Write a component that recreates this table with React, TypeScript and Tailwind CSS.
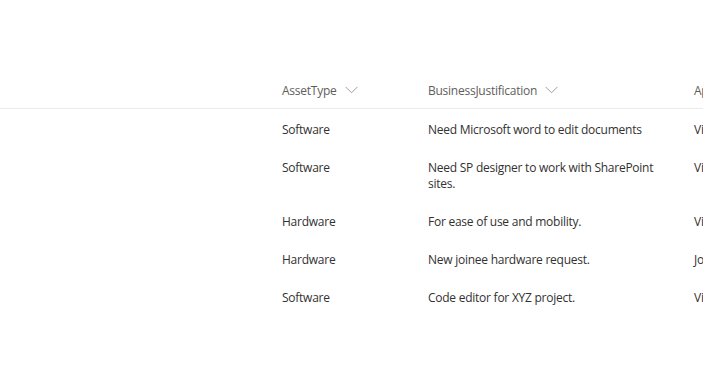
import React from "react";

const rows: [string, string, string][] = [
  ["Software", "Need Microsoft word to edit documents", "Vivek"],
  ["Software", "Need SP designer to work with SharePoint sites.", "Vivek"],
  ["Hardware", "For ease of use and mobility.", "Vivek"],
  ["Hardware", "New joinee hardware request.", "John"],
  ["Software", "Code editor for XYZ project.", "Vivek"],
];

function Chevron() {
  return (
    <svg width="13" height="8" viewBox="0 0 13 8" className="ml-[8px] mt-[3px]">
      <path d="M0.5 0.8 L6.5 6.8 L12.5 0.8" fill="none" stroke="#a19f9d" strokeWidth="1" />
    </svg>
  );
}

export default function App() {
  return (
    <div
      className="w-[703px] h-[369px] bg-white overflow-hidden text-[12px] leading-[16px] tracking-[-0.25px]"
      style={{ fontFamily: '"Open Sans", "Noto Sans", sans-serif' }}
    >
      <div className="pt-[83px]">
        <div className="flex h-[26px] border-b border-[#edebe9] w-[760px] text-[#605e5c]">
          <div className="w-[282px] shrink-0" />
          <div className="w-[146px] shrink-0 flex items-start">
            <span>AssetType</span>
            <Chevron />
          </div>
          <div className="w-[266px] shrink-0 flex items-start">
            <span>BusinessJustification</span>
            <Chevron />
          </div>
          <div className="shrink-0">ApprovedBy</div>
        </div>
        <div className="text-[#323130]">
          {rows.map((r, i) => (
            <div key={i} className="flex w-[760px] pt-[13px] pb-[9px]">
              <div className="w-[282px] shrink-0" />
              <div className="w-[146px] shrink-0">{r[0]}</div>
              <div className="w-[266px] shrink-0 pr-[20px]">{r[1]}</div>
              <div className="shrink-0">{r[2]}</div>
            </div>
          ))}
        </div>
      </div>
    </div>
  );
}
